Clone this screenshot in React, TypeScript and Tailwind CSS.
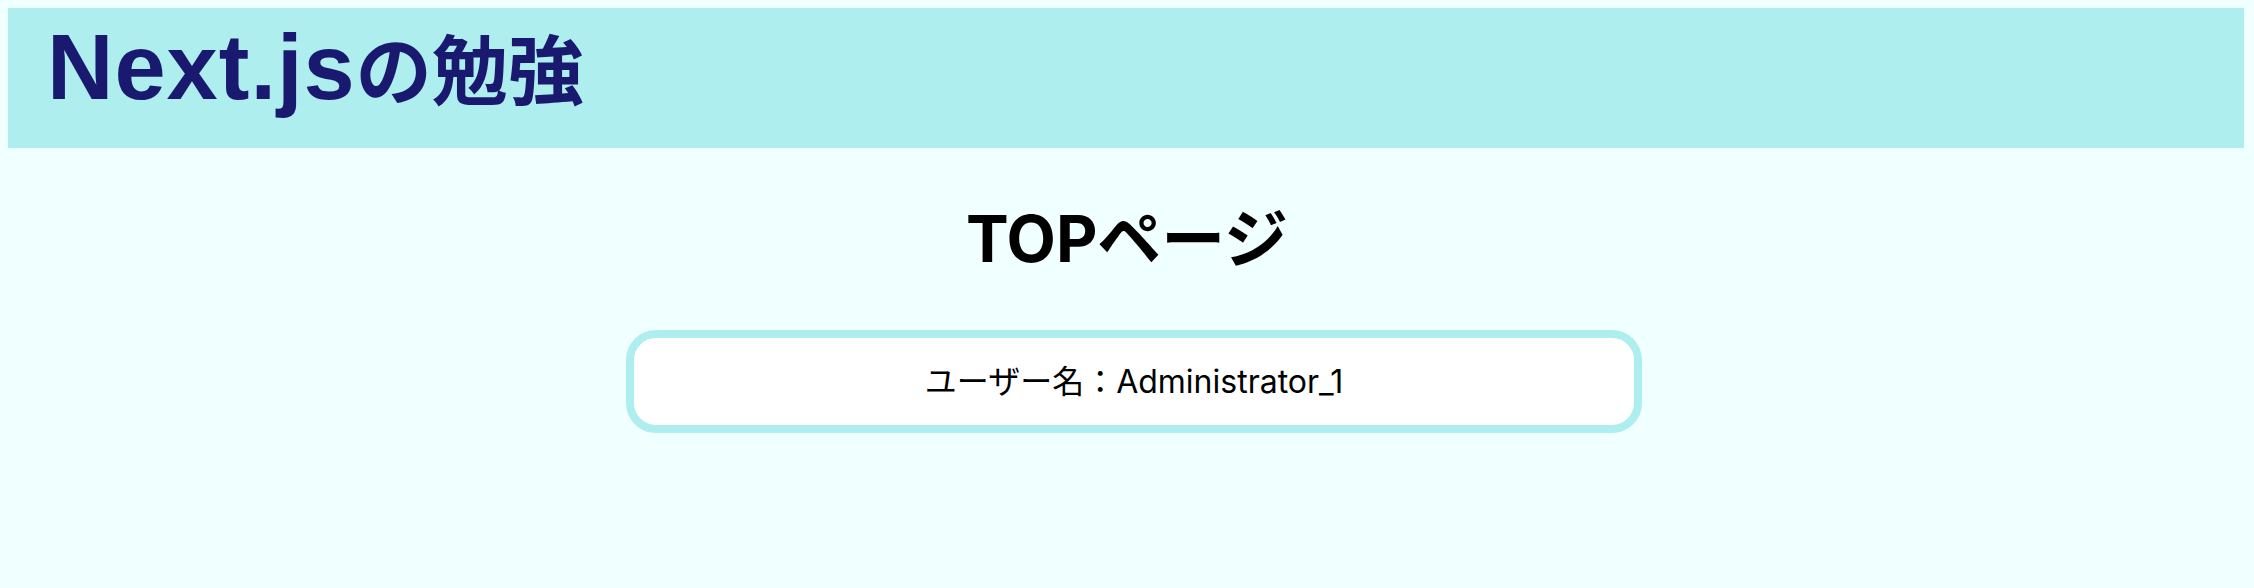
export default function App() {
  return (
    <div className="min-h-screen w-full bg-[#f0ffff] pt-2">
      <header className="ml-2 mr-[10px] h-[140px] bg-[#afeeee] pl-[39px] pt-[13px]">
        <h1 className="font-['Liberation_Sans','Noto_Sans_CJK_JP',sans-serif] text-[92px] font-bold leading-none text-[#191970]">
          <span className="tracking-[1px]">Next.js</span>
          <span className="font-['Noto_Sans_CJK_JP',sans-serif] text-[76px]">の勉強</span>
        </h1>
      </header>

      <main className="font-['Inter','Noto_Sans_CJK_JP',sans-serif] text-black">
        <h2 className="mt-[59px] text-center text-[64px] font-bold leading-none">TOPページ</h2>

        <div className="mt-[59px] flex justify-center pl-[14px]">
          <div className="w-[1016px] rounded-[30px] border-8 border-[#afeeee] bg-white pb-[27px] pt-[28px] text-center text-[32px] leading-none">
            ユーザー名：Administrator_1
          </div>
        </div>
      </main>
    </div>
  )
}
